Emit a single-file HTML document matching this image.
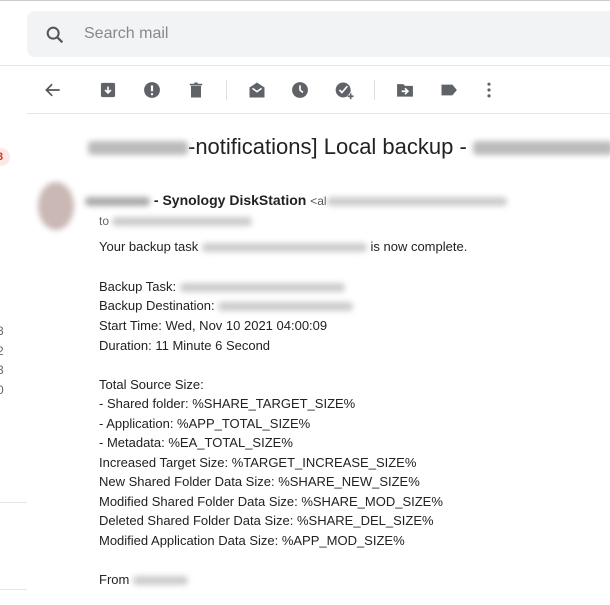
<!DOCTYPE html>
<html><head><style>
body{margin:0;width:610px;height:605px;background:#fff;font-family:"Liberation Sans",sans-serif;position:relative;overflow:hidden}
.a{position:absolute}
.t{position:absolute;left:99px;font-size:13px;color:#222;white-space:nowrap}
.blur{display:inline-block;background:#ccc;filter:blur(3px);height:9px;vertical-align:middle;border-radius:4px}
.ic{position:absolute;top:80px;width:20px;height:20px}
</style></head><body>
<div class="a" style="left:0;top:0;width:610px;height:1px;background:#ccc"></div>
<div class="a" style="left:27px;top:11px;width:600px;height:46px;background:#f1f3f4;border-radius:8px"></div>
<svg class="a" style="left:44px;top:24px" width="22" height="22" viewBox="0 0 24 24"><circle cx="10" cy="10" r="6" fill="none" stroke="#555" stroke-width="2.2"/><path d="M14.5 14.5L20 20" stroke="#555" stroke-width="2.4"/></svg>
<div class="a" style="left:84px;top:25px;font-size:16px;color:#888">Search mail</div>
<div class="a" style="left:0;top:65px;width:610px;height:1px;background:#e6e6e6"></div>
<svg class="ic" style="left:43px" viewBox="0 0 24 24"><path d="M20 12H5M11 5l-7 7 7 7" fill="none" stroke="#555" stroke-width="2"/></svg>
<svg class="ic" style="left:98px" viewBox="0 0 24 24"><rect x="3.5" y="3.5" width="17" height="17" rx="2" fill="#5f6368"/><path d="M12 8v7M8.5 12l3.5 3.5 3.5-3.5" stroke="#fff" stroke-width="2" fill="none"/></svg>
<svg class="ic" style="left:142px" viewBox="0 0 24 24"><circle cx="12" cy="12" r="9.5" fill="#5f6368"/><path d="M12 6.5v7" stroke="#fff" stroke-width="2.6"/><circle cx="12" cy="17" r="1.4" fill="#fff"/></svg>
<svg class="ic" style="left:186px" viewBox="0 0 24 24"><path d="M6 7h12v14H6zM4.5 4.5h15v2h-15zM10 3h4v2h-4z" fill="#5f6368"/></svg>
<div class="a" style="left:226px;top:80px;width:1px;height:20px;background:#e0e0e0"></div>
<svg class="ic" style="left:247px" viewBox="0 0 24 24"><path d="M3 9l9-6 9 6v12H3z" fill="#5f6368"/><path d="M6.5 10l5.5 4 5.5-4" stroke="#fff" stroke-width="1.8" fill="none"/></svg>
<svg class="ic" style="left:290px" viewBox="0 0 24 24"><circle cx="12" cy="12" r="9.5" fill="#5f6368"/><path d="M12 6.5v5.5l3.5 3" stroke="#fff" stroke-width="2" fill="none"/></svg>
<svg class="ic" style="left:334px" viewBox="0 0 24 24"><circle cx="11" cy="12" r="9" fill="#5f6368"/><path d="M6.5 12l3 3 6.5-7.5" stroke="#fff" stroke-width="2" fill="none"/><path d="M20 16v7M16.5 19.5h7" stroke="#fff" stroke-width="4"/><path d="M20 16v7M16.5 19.5h7" stroke="#5f6368" stroke-width="2"/></svg>
<div class="a" style="left:374px;top:80px;width:1px;height:20px;background:#e0e0e0"></div>
<svg class="ic" style="left:395px" viewBox="0 0 24 24"><path d="M2.5 5h7.5l2 2h9.5v13H2.5z" fill="#5f6368"/><path d="M8 13.5h7M12 10l3.5 3.5-3.5 3.5" stroke="#fff" stroke-width="2" fill="none"/></svg>
<svg class="ic" style="left:439px" viewBox="0 0 24 24"><path d="M3 5.5h13l5.5 6.5-5.5 6.5H3z" fill="#5f6368"/></svg>
<svg class="ic" style="left:479px" viewBox="0 0 24 24"><circle cx="12" cy="5" r="1.9" fill="#5f6368"/><circle cx="12" cy="12" r="1.9" fill="#5f6368"/><circle cx="12" cy="19" r="1.9" fill="#5f6368"/></svg>
<div class="a" style="left:27px;top:113px;width:583px;height:1px;background:#e6e6e6"></div>
<div class="a" style="left:-8px;top:148px;width:18px;height:18px;border-radius:50%;background:#fce8e6"></div>
<div class="a" style="left:-3px;top:151px;font-size:11px;color:#d93025;font-weight:bold">3</div>
<div class="a" style="left:88px;top:134px;font-size:22px;color:#222;white-space:nowrap"><span class="blur" style="width:100px;height:14px;background:#bbb"></span>-notifications] Local backup - <span class="blur" style="width:140px;height:14px;background:#bbb"></span></div>
<div class="a" style="left:38px;top:182px;width:36px;height:48px;border-radius:50%;background:#c9b8b4;filter:blur(3px)"></div>
<div class="a" style="left:85px;top:192px;font-size:14px;color:#222;white-space:nowrap"><span class="blur" style="width:65px;background:#aaa"></span> <b>- Synology DiskStation</b> <span style="font-size:12px;color:#555">&lt;al</span><span class="blur" style="width:180px"></span></div>
<div class="a" style="left:99px;top:214px;font-size:12px;color:#666">to <span class="blur" style="width:140px"></span></div>
<div class="a" style="left:-3px;top:322px;font-size:12px;color:#666;line-height:19.5px">3<br>2<br>3<br>0</div>
<div class="a" style="left:0;top:502px;width:27px;height:1px;background:#e6e6e6"></div>
<div class="a" style="left:0;top:589px;width:27px;height:1px;background:#e6e6e6"></div>
<div class="t" style="top:239px">Your backup task <span class="blur" style="width:165px"></span> is now complete.</div>
<div class="t" style="top:279px">Backup Task: <span class="blur" style="width:165px"></span></div>
<div class="t" style="top:298px">Backup Destination: <span class="blur" style="width:135px"></span></div>
<div class="t" style="top:318px">Start Time: Wed, Nov 10 2021 04:00:09</div>
<div class="t" style="top:338px">Duration: 11 Minute 6 Second</div>
<div class="t" style="top:377px">Total Source Size:</div>
<div class="t" style="top:396px">- Shared folder: %SHARE_TARGET_SIZE%</div>
<div class="t" style="top:416px">- Application: %APP_TOTAL_SIZE%</div>
<div class="t" style="top:435px">- Metadata: %EA_TOTAL_SIZE%</div>
<div class="t" style="top:455px">Increased Target Size: %TARGET_INCREASE_SIZE%</div>
<div class="t" style="top:474px">New Shared Folder Data Size: %SHARE_NEW_SIZE%</div>
<div class="t" style="top:494px">Modified Shared Folder Data Size: %SHARE_MOD_SIZE%</div>
<div class="t" style="top:513px">Deleted Shared Folder Data Size: %SHARE_DEL_SIZE%</div>
<div class="t" style="top:533px">Modified Application Data Size: %APP_MOD_SIZE%</div>
<div class="t" style="top:572px">From <span class="blur" style="width:55px"></span></div>
</body></html>
